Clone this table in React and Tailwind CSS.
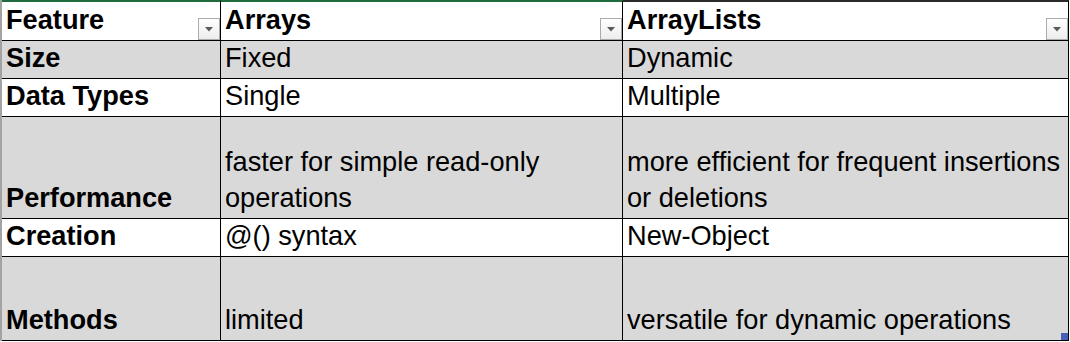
import React from "react";

const rows = [
  { feature: "Size", arrays: ["Fixed"], lists: ["Dynamic"], h: "h-[38px]", gray: true },
  { feature: "Data Types", arrays: ["Single"], lists: ["Multiple"], h: "h-[38px]", gray: false },
  {
    feature: "Performance",
    arrays: ["faster for simple read-only", "operations"],
    lists: ["more efficient for frequent insertions", "or deletions"],
    h: "h-[102px]",
    gray: true,
  },
  { feature: "Creation", arrays: ["@() syntax"], lists: ["New-Object"], h: "h-[38px]", gray: false },
  { feature: "Methods", arrays: ["limited"], lists: ["versatile for dynamic operations"], h: "h-[84px]", gray: true },
];

const FilterButton = () => (
  <div className="w-[22px] h-[22px] shrink-0 border border-[#ababab] bg-gradient-to-b from-white to-[#ededed] flex items-center justify-center">
    <svg width="8" height="5" viewBox="0 0 8 5">
      <path d="M0 0 L8 0 L4 4.5 Z" fill="#5a5a5a" />
    </svg>
  </div>
);

const Cell = ({ lines, bold, className }) => (
  <div className={`flex flex-col justify-end pl-[4px] pb-[2px] border-r border-b border-black ${className}`}>
    {lines.map((l) => (
      <span key={l} className={`block leading-[36px] whitespace-nowrap ${bold ? "font-bold" : ""}`}>
        {l}
      </span>
    ))}
  </div>
);

const HeadCell = ({ label, top }) => (
  <div className={`h-[41px] border-t-2 ${top} border-r border-b border-black flex items-end justify-between pl-[4px]`}>
    <span className="font-bold leading-[36px] pb-[2px]">{label}</span>
    <FilterButton />
  </div>
);

export default function App() {
  return (
    <div className="w-[1070px] h-[342px] bg-white text-black text-[27.2px] font-['Liberation_Sans',Arial,sans-serif]">
      <div className="relative w-[1069px] border-l-2 border-[#a3a3a3] grid grid-cols-[219px_402px_446px]">
        <HeadCell label="Feature" top="border-t-[#1f6b3d]" />
        <HeadCell label="Arrays" top="border-t-[#1f6b3d]" />
        <HeadCell label="ArrayLists" top="border-t-[#2b2b2b]" />
        {rows.map((r) => {
          const bg = r.gray ? "bg-[#d9d9d9]" : "bg-white";
          return (
            <React.Fragment key={r.feature}>
              <Cell lines={[r.feature]} bold className={`${r.h} ${bg}`} />
              <Cell lines={r.arrays} className={`${r.h} ${bg}`} />
              <Cell lines={r.lists} className={`${r.h} ${bg}`} />
            </React.Fragment>
          );
        })}
        <div className="absolute right-[1px] bottom-[1px] w-[7px] h-[7px] bg-[#4a5cb5]" />
      </div>
    </div>
  );
}
